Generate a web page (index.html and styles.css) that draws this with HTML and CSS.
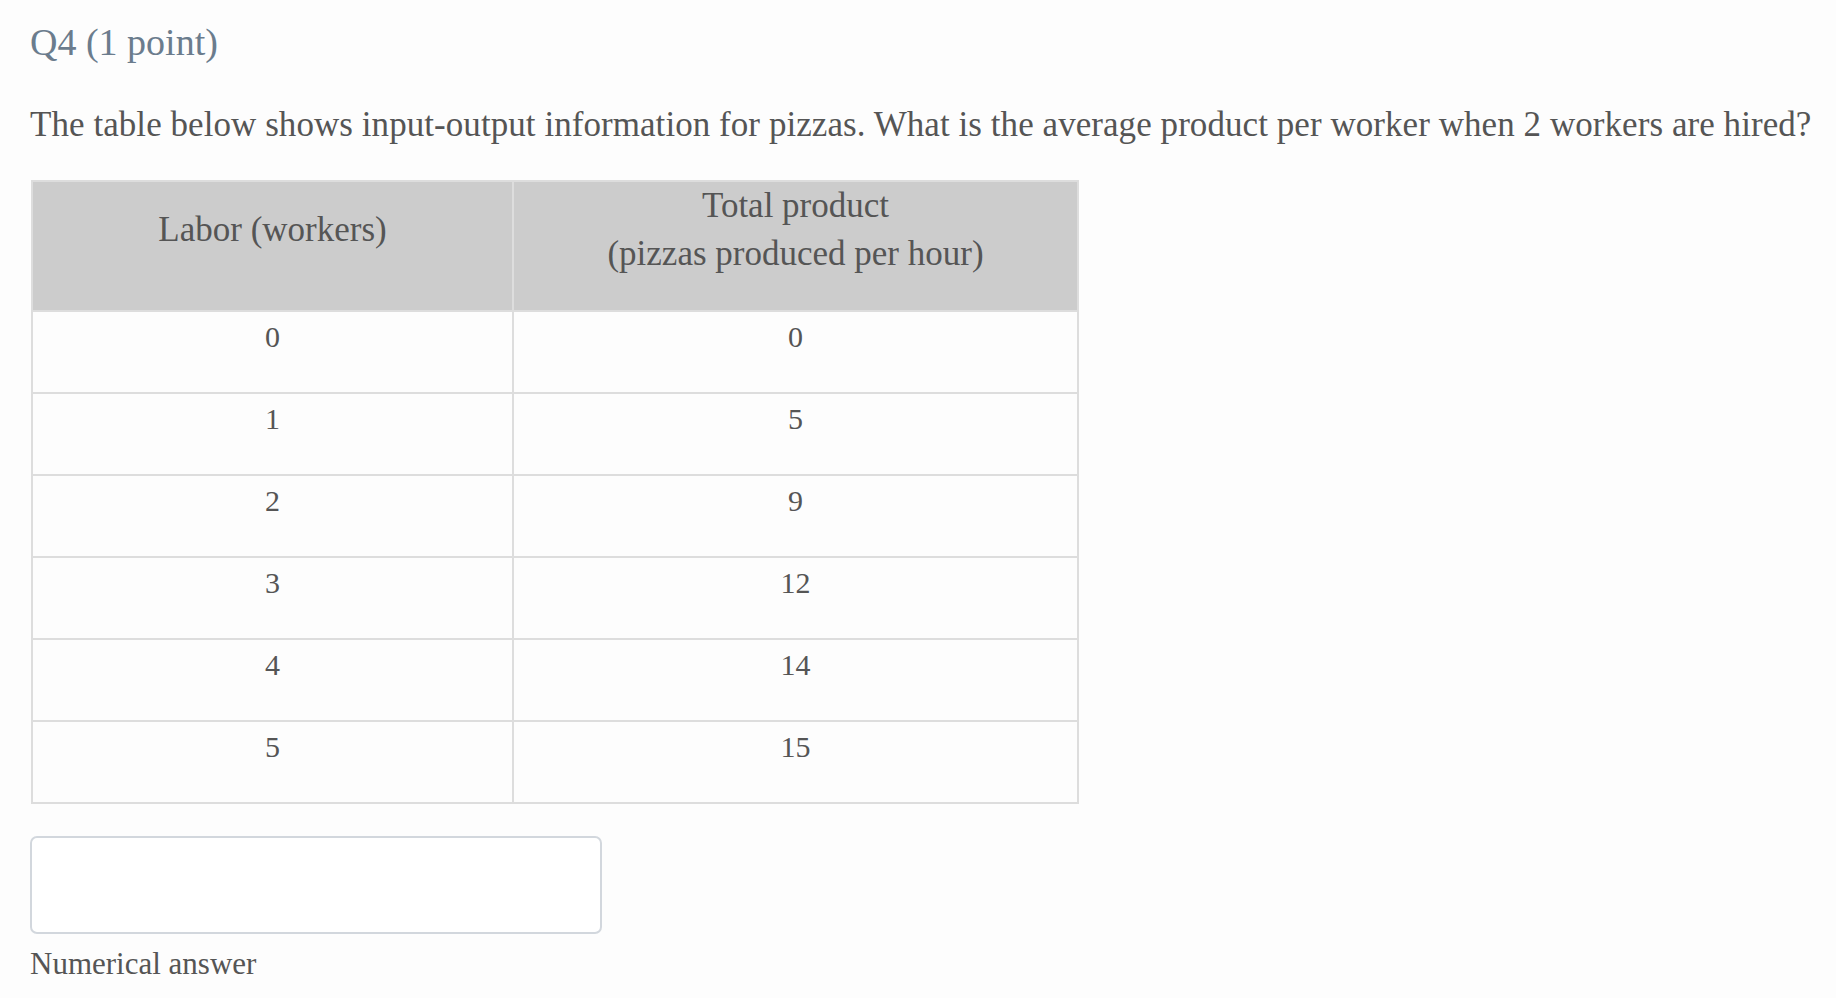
FILE: index.html
```html
<!DOCTYPE html>
<html lang="en">
<head>
<meta charset="utf-8">
<title>Q4</title>
<link rel="stylesheet" href="styles.css">
</head>
<body>
<main class="question">
  <h2 class="q-title">Q4 (1 point)</h2>
  <p class="q-text">The table below shows input-output information for pizzas. What is the average product per worker when 2 workers are hired?</p>
  <table class="data-table">
    <thead>
      <tr>
        <th class="col-a">Labor (workers)</th>
        <th class="col-b">Total product<br>(pizzas produced per hour)</th>
      </tr>
    </thead>
    <tbody>
      <tr><td>0</td><td>0</td></tr>
      <tr><td>1</td><td>5</td></tr>
      <tr><td>2</td><td>9</td></tr>
      <tr><td>3</td><td>12</td></tr>
      <tr><td>4</td><td>14</td></tr>
      <tr><td>5</td><td>15</td></tr>
    </tbody>
  </table>
  <div class="answer">
    <input class="answer-input" type="text" aria-label="Numerical answer">
    <div class="answer-label">Numerical answer</div>
  </div>
</main>
</body>
</html>
```
FILE: styles.css
```css
html, body {
  margin: 0;
  padding: 0;
  background: #fdfdfd;
}
body {
  font-family: "Liberation Serif", "Times New Roman", serif;
  color: #555555;
}
.question {
  padding: 19px 0 0 30px;
}
.q-title {
  margin: 0;
  font-weight: normal;
  font-size: 38px;
  line-height: 46px;
  color: #6b7c8d;
}
.q-text {
  margin: 39px 0 0 0;
  font-size: 35px;
  letter-spacing: 0.06px;
  line-height: 42px;
}
.data-table {
  margin-top: 34px;
  margin-left: 1px;
  border-collapse: collapse;
  width: 1048px;
  font-size: 35px;
}
.data-table th,
.data-table td {
  border: 2px solid #dddddd;
  text-align: center;
  font-weight: normal;
  padding: 0;
}
.data-table th {
  background: #cccccc;
  height: 128px;
  line-height: 48px;
  vertical-align: top;
  padding-top: 0;
}
.data-table th.col-a {
  width: 479px;
  padding-top: 24px;
  height: 104px;
}
.data-table td {
  background: #fdfdfd;
  height: 75px;
  vertical-align: top;
  padding-top: 5px;
  line-height: 40px;
  font-size: 30px;
}
.answer {
  margin-top: 32px;
}
.answer-input {
  display: block;
  box-sizing: border-box;
  width: 572px;
  height: 98px;
  margin: 0;
  border: 2px solid #d2d7dd;
  border-radius: 7px;
  background: #ffffff;
  outline: none;
}
.answer-label {
  margin-top: 12px;
  font-size: 31px;
  line-height: 36px;
}
```
